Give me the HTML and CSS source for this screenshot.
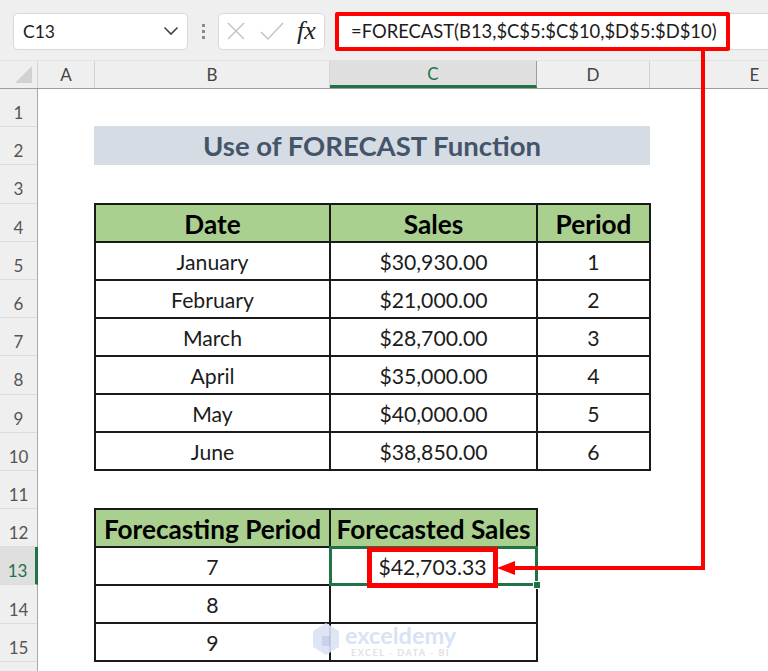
FILE: index.html
```html
<!DOCTYPE html>
<html lang="en">
  <head>
    <meta charset="UTF-8" />
    <meta name="viewport" content="width=device-width, initial-scale=1.0" />
    <title>Use of FORECAST Function</title>
    <link rel="stylesheet" href="styles.css">
  </head>
  <body>
    <div class="toolbar">
      <div class="name-box">
        <span>C13</span>
        <svg width="16" height="10" viewBox="0 0 16 10"><path d="M1.5 1.5 8 8l6.5-6.5" fill="none" stroke="#444" stroke-width="1.6"/></svg>
      </div>
      <div class="dots"><i></i><i></i><i></i></div>
      <div class="fx-box">
        <svg width="20" height="20" viewBox="0 0 20 20"><path d="M2 2l16 16M18 2 2 18" fill="none" stroke="#c4c4c4" stroke-width="1.5"/></svg>
        <svg width="26" height="20" viewBox="0 0 26 20"><path d="M2 11l7 7L24 2" fill="none" stroke="#c4c4c4" stroke-width="1.5"/></svg>
        <span class="fx">fx</span>
      </div>
      <div class="formula-bar">
        <div class="formula">=FORECAST(B13,$C$5:$C$10,$D$5:$D$10)</div>
      </div>
    </div>

    <div class="col-heads">
      <div class="corner"><div class="triangle"></div></div>
      <div class="col col-a">A</div>
      <div class="col col-b">B</div>
      <div class="col col-c active">C</div>
      <div class="col col-d">D</div>
      <div class="col col-e">E</div>
    </div>

    <div class="sheet">
      <div class="row-heads">
        <div class="row">1</div>
        <div class="row">2</div>
        <div class="row">3</div>
        <div class="row">4</div>
        <div class="row">5</div>
        <div class="row">6</div>
        <div class="row">7</div>
        <div class="row">8</div>
        <div class="row">9</div>
        <div class="row">10</div>
        <div class="row">11</div>
        <div class="row">12</div>
        <div class="row active">13</div>
        <div class="row">14</div>
        <div class="row">15</div>
      </div>

      <div class="cells">
        <div class="title">Use of FORECAST Function</div>

        <table class="data sales">
          <thead>
            <tr><th class="col-b">Date</th><th class="col-c">Sales</th><th class="col-d">Period</th></tr>
          </thead>
          <tbody>
            <tr><td>January</td><td>$30,930.00</td><td>1</td></tr>
            <tr><td>February</td><td>$21,000.00</td><td>2</td></tr>
            <tr><td>March</td><td>$28,700.00</td><td>3</td></tr>
            <tr><td>April</td><td>$35,000.00</td><td>4</td></tr>
            <tr><td>May</td><td>$40,000.00</td><td>5</td></tr>
            <tr><td>June</td><td>$38,850.00</td><td>6</td></tr>
          </tbody>
        </table>

        <table class="data forecast">
          <thead>
            <tr><th class="col-b">Forecasting Period</th><th class="col-c">Forecasted Sales</th></tr>
          </thead>
          <tbody>
            <tr><td>7</td><td class="selected"><span class="result">$42,703.33</span><span class="handle"></span></td></tr>
            <tr><td>8</td><td></td></tr>
            <tr><td>9</td><td></td></tr>
          </tbody>
        </table>

        <div class="watermark">
          <svg width="28" height="32" viewBox="0 0 28 32"><path d="M14 0 27 8v16l-13 8-13-8V8z" fill="#dbe3f5"/><path d="M10 13h8v10h-8z" fill="#c3cfe9"/></svg>
          <div class="watermark-text">
            <div class="brand">exceldemy</div>
            <div class="tag">EXCEL - DATA - BI</div>
          </div>
        </div>
      </div>
    </div>

    <!-- red callout from the formula bar to the result cell -->
    <svg class="callout" width="768" height="671" viewBox="0 0 768 671">
      <path d="M703 49V568H512" fill="none" stroke="#f00" stroke-width="4"/>
      <path d="M497 568 515 561V575z" fill="#f00"/>
    </svg>
  </body>
</html>
```

FILE: styles.css
```css
* {
  box-sizing: border-box;
}
html,
body {
  height: 671px;
  overflow: hidden;
}
body {
  margin: 0;
  background: white;
  font-family: Lato, "Open Sans", sans-serif;
  color: #1c1c1c;
}
.toolbar {
  display: flex;
  align-items: center;
  height: 60px;
  padding: 2px 0 0 13px;
  background: #efefef;
}
.name-box {
  display: flex;
  align-items: center;
  justify-content: space-between;
  width: 175px;
  height: 37px;
  padding: 0 8px 0 9px;
  background: white;
  border: 1px solid #d9d9d9;
  border-radius: 5px;
  font-size: 17.5px;
}
.dots {
  display: flex;
  flex-direction: column;
  gap: 3px;
  width: 30px;
  align-items: center;
}
.dots i {
  width: 3px;
  height: 3px;
  background: #8a8a8a;
}
.fx-box {
  display: flex;
  align-items: center;
  width: 107px;
  height: 37px;
  padding-left: 7px;
  gap: 13px;
  background: white;
  border: 1px solid #d9d9d9;
  border-radius: 5px;
}
.fx {
  margin-left: -1px;
  font-family: "Liberation Serif", serif;
  font-style: italic;
  font-size: 26px;
  line-height: 26px;
  color: #222;
}
.formula-bar {
  flex: 1;
  height: 37px;
  margin-left: 10px;
  background: white;
  border-top: 1px solid #d9d9d9;
  border-bottom: 1px solid #d9d9d9;
}
.formula {
  width: 395px;
  height: 39px;
  margin-top: -2px;
  padding-left: 12px;
  border: 4px solid #f00;
  border-radius: 2px;
  font-size: 18.4px;
  line-height: 31px;
  white-space: nowrap;
}
.col-heads {
  display: flex;
  height: 29px;
  background: #efefef;
  border-top: 1px solid #e2e2e2;
  border-bottom: 1px solid #9e9e9e;
  font-size: 17px;
  color: #444;
  overflow: hidden;
}
.corner {
  flex: none;
  width: 38px;
  position: relative;
  border-right: 1px solid #d4d4d4;
}
.triangle {
  position: absolute;
  right: 5px;
  bottom: 5px;
  border-style: solid;
  border-width: 0 0 17px 17px;
  border-color: transparent transparent #d2d2d2 transparent;
}
.col {
  flex: none;
  display: flex;
  align-items: center;
  justify-content: center;
  border-right: 1px solid #d4d4d4;
}
.col-a {
  width: 57px;
}
.col-b {
  width: 235px;
}
.col-c {
  width: 207px;
}
.col-d {
  width: 113px;
}
.col-e {
  width: 210px;
}
.col.active {
  background: #dfdfdf;
  color: #217346;
  border-bottom: 3px solid #217346;
  border-right-color: #9e9e9e;
}
.sheet {
  display: flex;
}
.row-heads {
  flex: none;
  width: 38px;
  height: 582px;
  background: #efefef;
  border-right: 1px solid #a8a8a8;
}
.row {
  display: flex;
  align-items: center;
  justify-content: center;
  height: 38.2px;
  padding-top: 10px;
  border-bottom: 1px solid #dcdcdc;
  font-size: 17px;
  color: #555;
}
.row.active {
  background: #dfdfdf;
  color: #217346;
  border-right: 3px solid #217346;
  margin-right: -1px;
}
.cells {
  position: relative;
  flex: 1;
  padding: 37px 0 0 56px;
}
.title {
  display: flex;
  align-items: center;
  justify-content: center;
  width: 556px;
  height: 39px;
  background: #d6dce4;
  color: #44546a;
  font-size: 27.5px;
  font-weight: bold;
}
.data {
  border-collapse: collapse;
  table-layout: fixed;
  font-size: 21.2px;
}
.sales {
  width: 555px;
  margin-top: 38px;
}
.forecast {
  width: 442px;
  margin-top: 37px;
}
th,
td {
  height: 38px;
  padding: 1px 0 0;
  border: 2px solid #1a1a1a;
  text-align: center;
}
th {
  background: #a9d08e;
  color: black;
  font-size: 26.2px;
  white-space: nowrap;
}
.selected {
  position: relative;
  text-align: right;
  outline: 3px solid #217346;
  outline-offset: -2px;
}
.result {
  position: absolute;
  top: -1px;
  left: 36px;
  width: 131px;
  height: 41px;
  border: 5px solid #f00;
  background: white;
  text-align: center;
  line-height: 31px;
}
.handle {
  position: absolute;
  right: -5px;
  bottom: -5px;
  width: 8px;
  height: 8px;
  background: #217346;
  border: 1px solid white;
}
.watermark {
  position: absolute;
  left: 274px;
  top: 534px;
  display: flex;
  gap: 5px;
  opacity: 0.9;
}
.watermark-text {
  display: flex;
  flex-direction: column;
  align-items: center;
}
.brand {
  font-size: 23.5px;
  font-weight: bold;
  line-height: 24px;
  color: #d6dff5;
}
.tag {
  font-size: 9px;
  font-weight: bold;
  letter-spacing: 1.5px;
  color: #dedede;
}
.callout {
  position: absolute;
  top: 0;
  left: 0;
  pointer-events: none;
}
```
